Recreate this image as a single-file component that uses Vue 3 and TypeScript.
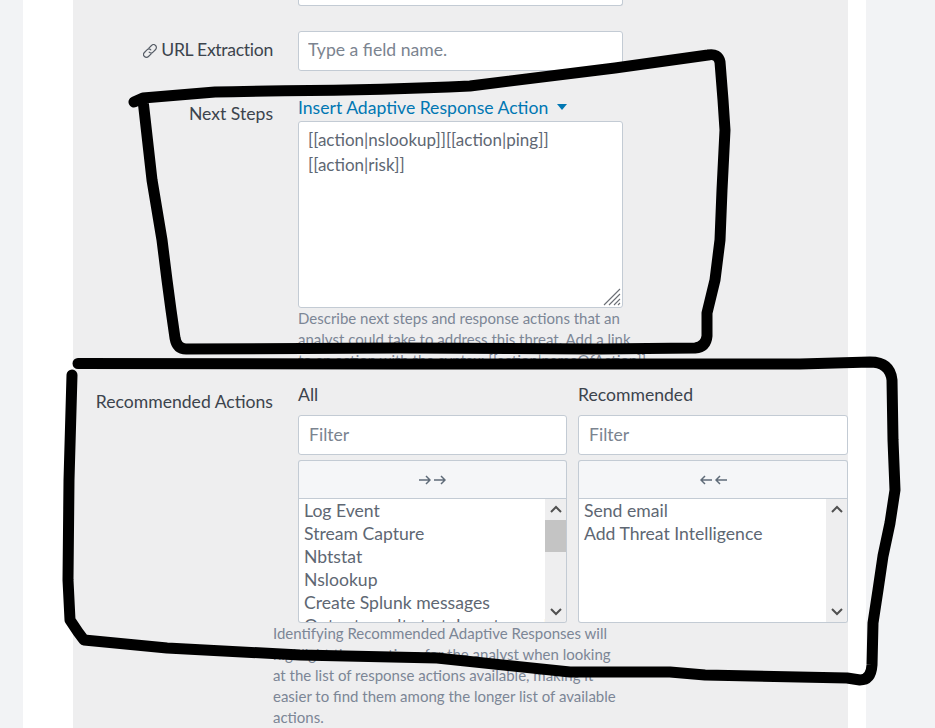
<script setup lang="ts">
const allActions: string[] = ['Log Event', 'Stream Capture', 'Nbtstat', 'Nslookup', 'Create Splunk messages', 'Output results to telemetry endpoint']
const recommended: string[] = ['Send email', 'Add Threat Intelligence']
const nextSteps = '[[action|nslookup]][[action|ping]]\n[[action|risk]]'
const columns = [
  { title: 'All', items: allActions, dir: 'right', thumb: true },
  { title: 'Recommended', items: recommended, dir: 'left', thumb: false },
]
</script>

<template>
  <div class="page">
    <div class="sheet">
      <div class="panel">
        <div class="stub"></div>

        <div class="row url-row">
          <label class="label url-label">
            <svg class="link-icon" viewBox="1 1 12 12" width="14" height="14" fill="none" stroke="#555c66" stroke-width="1" stroke-linecap="round">
              <path d="M6 4.6 L8.3 2.3 A2.4 2.4 0 0 1 11.8 5.7 L9.6 7.9 A2.4 2.4 0 0 1 6.3 8" />
              <path d="M8 9.4 L5.7 11.7 A2.4 2.4 0 0 1 2.2 8.3 L4.4 6.1 A2.4 2.4 0 0 1 7.7 6" />
            </svg>
            URL Extraction
          </label>
          <input class="field wide" placeholder="Type a field name." />
        </div>

        <div class="row steps-row">
          <label class="label steps-label">Next Steps</label>
          <div class="wide-col">
            <a class="insert">Insert Adaptive Response Action<span class="caret"></span></a>
            <div class="area-wrap">
              <textarea class="area" readonly :value="nextSteps"></textarea>
              <svg class="grip" viewBox="0 0 18 18" width="18" height="18" stroke="#6b6f75" stroke-width="1.1">
                <path d="M1 17 L17 1 M6 17 L17 6 M11 17 L17 11 M15 17 L17 15" />
              </svg>
            </div>
            <p class="help steps-help">Describe next steps and response actions that an<br />analyst could take to address this threat. Add a link<br />to an action with the syntax: [[action|nameOfAction]].</p>
          </div>
        </div>

        <div class="row rec-row">
          <label class="label rec-label">Recommended Actions</label>
          <div class="columns">
            <div v-for="col in columns" :key="col.title" class="col">
              <div class="col-title">{{ col.title }}</div>
              <input class="field filter" placeholder="Filter" />
              <button class="move" type="button">
                <svg v-for="n in 2" :key="n" viewBox="0 0 12 10" width="12" height="10" fill="none" stroke="#5f6b78" stroke-width="1.5">
                  <path v-if="col.dir === 'right'" d="M0 5 H11 M7 1 L11 5 L7 9" />
                  <path v-else d="M12 5 H1 M5 1 L1 5 L5 9" />
                </svg>
              </button>
              <div class="list">
                <ul class="items">
                  <li v-for="item in col.items" :key="item">{{ item }}</li>
                </ul>
                <div class="scroll">
                  <svg class="chev" viewBox="0 0 12 8" width="12" height="8" fill="none" stroke="#505050" stroke-width="2"><path d="M1 7 L6 2 L11 7" /></svg>
                  <div class="track"><div v-if="col.thumb" class="thumb"></div></div>
                  <svg class="chev" viewBox="0 0 12 8" width="12" height="8" fill="none" stroke="#505050" stroke-width="2"><path d="M1 1 L6 6 L11 1" /></svg>
                </div>
              </div>
            </div>
          </div>
        </div>

        <p class="help rec-help">Identifying Recommended Adaptive Responses will highlight these actions for the analyst when looking at the list of response actions available, making it easier to find them among the longer list of available actions.</p>
      </div>
    </div>

    <svg class="ink" viewBox="0 0 935 728" width="935" height="728" fill="none" stroke="#000" stroke-width="11" stroke-linecap="round" stroke-linejoin="round">
      <path d="M134 102 L143 98 L215 92 C280 90 340 92 470 86 L615 68 L708 55 Q718 53 720 62 L723 100 L725 130 L722 190 L720 240 L715 280 L707 313 L707 336 Q706 347 695 348 L600 349 L400 348 L186 349 Q177 349 175 338 L171 310 L167 280 L162 240 L152 180 L143 100" />
      <path d="M78 363.5 L400 364 L800 364 L870 362 Q890 362 892 380 L893 440 L895 490 L890 523 L883 556 L878 590 L873 623 L872 665 Q871 680 860 680 L847 678 L705 675 L670 672 L570 672 L437 658 L300 655 L167 648 L84 640 L78 632 L70 620 L68 580 L69 480 L72 375" />
    </svg>
  </div>
</template>

<style>
html, body { margin: 0; }
</style>

<style scoped>
.page {
  position: relative;
  box-sizing: border-box;
  width: 935px;
  height: 728px;
  overflow: hidden;
  display: flex;
  padding: 0 69px 0 23px;
  background: #f2f3f5;
  font-family: Lato, "Open Sans", sans-serif;
  font-size: 17.6px;
  color: #3c444d;
}
.sheet {
  flex: 1;
  display: flex;
  padding: 0 18px 0 50px;
  background: #fff;
}
.panel {
  flex: 1;
  background: #eeeeef;
}
.stub {
  box-sizing: border-box;
  width: 325px;
  height: 6px;
  margin-left: 225px;
  background: #fff;
  border: 1px solid #c3cbd4;
  border-top: 0;
  border-radius: 0 0 3px 3px;
}
.row {
  display: grid;
  grid-template-columns: 200px 1fr;
  column-gap: 25px;
}
.label {
  text-align: right;
  line-height: 20px;
  white-space: nowrap;
}
.url-row { margin-top: 25px; }
.url-label {
  display: flex;
  align-items: center;
  justify-content: flex-end;
  gap: 4px;
  height: 40px;
  padding-bottom: 3px;
  box-sizing: border-box;
  letter-spacing: -0.3px;
}
.link-icon { margin-top: 3px; }
.field {
  box-sizing: border-box;
  display: block;
  width: 100%;
  height: 40px;
  padding: 0 9px 3px;
  background: #fff;
  border: 1px solid #c3cbd4;
  border-radius: 3px;
  font: inherit;
  color: #3c444d;
  outline: none;
}
.field::placeholder { color: #7b8490; opacity: 1; }
.filter { padding: 0 10px 2px; }
.wide { width: 325px; }
.steps-row { margin-top: 26px; }
.steps-label { padding-top: 7px; }
.wide-col { width: 340px; }
.insert {
  display: flex;
  align-items: center;
  height: 24px;
  padding-bottom: 4px;
  box-sizing: border-box;
  color: #0077b3;
  cursor: pointer;
}
.caret {
  width: 0;
  height: 0;
  margin: 0 0 0 9px;
  border: 5px solid transparent;
  border-top: 6px solid #0077b3;
  border-bottom: 0;
}
.area-wrap {
  position: relative;
  width: 325px;
  height: 187px;
}
.area {
  box-sizing: border-box;
  display: block;
  width: 100%;
  height: 100%;
  padding: 5px 9px;
  background: #fff;
  border: 1px solid #c3cbd4;
  border-radius: 3px;
  font: inherit;
  font-size: 17px;
  line-height: 25px;
  color: #5e6773;
  resize: none;
  outline: none;
}
.grip {
  position: absolute;
  right: 2px;
  bottom: 2px;
}
.help {
  margin: 0;
  font-size: 15px;
  line-height: 21px;
  color: #7c8696;
}
.steps-help {
  height: 63px;
  white-space: nowrap;
}
.rec-row { margin-top: 14px; }
.rec-label { padding-top: 7px; }
.columns {
  display: grid;
  grid-template-columns: 269px 270px;
  column-gap: 11px;
}
.col-title {
  height: 30px;
  line-height: 20px;
}
.move {
  display: flex;
  align-items: center;
  justify-content: center;
  gap: 3px;
  box-sizing: border-box;
  width: 100%;
  height: 40px;
  margin-top: 5px;
  padding: 0;
  background: #f5f6f8;
  border: 1px solid #c3cbd4;
  border-bottom-width: 2px;
  border-radius: 3px 3px 0 0;
}
.list {
  box-sizing: border-box;
  display: flex;
  height: 124px;
  margin-top: -1px;
  overflow: hidden;
  background: #fff;
  border: 1px solid #c3cbd4;
  border-top: 0;
  border-radius: 0 0 3px 3px;
}
.items {
  flex: 1;
  min-width: 0;
  margin: 0;
  padding: 0 0 0 5px;
  list-style: none;
  line-height: 23px;
  color: #5e6773;
  white-space: nowrap;
  overflow: hidden;
}
.scroll {
  flex: none;
  width: 21px;
  display: flex;
  flex-direction: column;
  align-items: center;
  background: #eeeeef;
}
.chev {
  flex: none;
  margin: 6px 0;
}
.track {
  flex: 1;
  width: 100%;
}
.thumb {
  height: 32px;
  margin-top: 1px;
  background: #c4c4c4;
}
.rec-help {
  width: 350px;
  margin-left: 200px;
}
.ink {
  position: absolute;
  top: 0;
  left: 0;
  pointer-events: none;
}
</style>
